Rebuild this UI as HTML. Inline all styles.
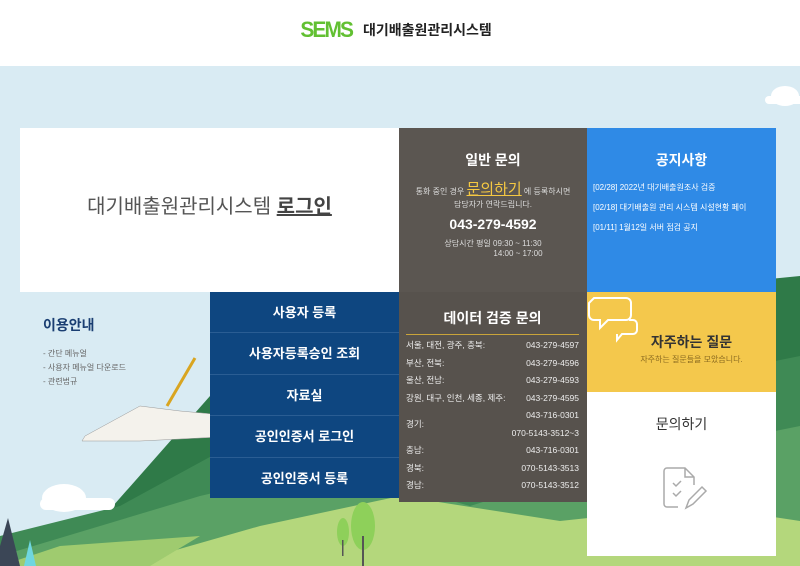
<!DOCTYPE html>
<html><head><meta charset="utf-8"><style>
*{margin:0;padding:0;box-sizing:border-box}
body{width:800px;height:566px;overflow:hidden;position:relative;font-family:"Liberation Sans","Noto Sans CJK KR",sans-serif;background:#d9ebf3}
.abs{position:absolute}
.hdr{left:0;top:0;width:800px;height:66px;background:#fff}
.c{text-align:center}
.menu div{height:41.4px;line-height:41px;border-bottom:1px solid #2a5d93;color:#fff;font-size:13px;font-weight:bold;text-align:center}
.row{display:flex;justify-content:space-between;font-size:8.5px;color:#eee;height:17.5px;line-height:17.5px}
</style></head><body>
<svg class="abs" style="left:0;top:66px" width="800" height="500">
<path d="M60 500 L210 330 L300 270 L420 200 L560 200 L700 220 L800 210 L800 500Z" fill="#2f7a48"/>
<path d="M0 470 L120 440 L230 380 L330 330 L470 380 L600 330 L800 290 L800 500 L0 500Z" fill="#3f8a55"/>
<path d="M0 490 L200 430 L330 400 L470 440 L600 400 L800 360 L800 500 L0 500Z" fill="#5aa165"/>
<path d="M120 500 L260 460 L400 430 L560 455 L700 440 L800 455 L800 500Z" fill="#b4d77c"/>
<path d="M0 500 L60 480 L200 470 L150 500Z" fill="#9fcb6f"/>
<path d="M0 480 L8 452 L20 500 L0 500Z" fill="#3b4656"/>
<path d="M24 500 L30 474 L36 500Z" fill="#6fd6df"/>
<ellipse cx="64" cy="432" rx="22" ry="14" fill="#fff"/><rect x="40" y="432" width="75" height="12" rx="6" fill="#fff"/>
<ellipse cx="785" cy="30" rx="14" ry="10" fill="#fff"/><rect x="765" y="30" width="40" height="8" rx="4" fill="#fff"/>
<ellipse cx="343" cy="466" rx="6" ry="14" fill="#8ed05a"/><ellipse cx="363" cy="460" rx="12" ry="24" fill="#8ed05a"/>
<rect x="362" y="470" width="2" height="30" fill="#555"/><rect x="342" y="474" width="1.5" height="16" fill="#555"/>
<path d="M85 370 L140 340 L180 345 L235 350 L240 370 L140 375 L82 375Z" fill="#f4f2ec" stroke="#999" stroke-width=".5"/>
<line x1="167" y1="340" x2="195" y2="292" stroke="#d9a520" stroke-width="3"/>
</svg>
<div class="abs hdr"><div class="abs" style="left:299px;top:17px;color:#62c032;font-weight:900;font-size:22px;letter-spacing:-2px;transform:scaleX(.95)">SEMS</div>
<div class="abs" style="left:363px;top:20px;font-size:14px;color:#222;font-weight:bold">대기배출원관리시스템</div></div>
<div class="abs" style="left:20px;top:128px;width:379px;height:164px;background:#fff;line-height:158px;text-align:center;font-size:20px;color:#555">대기배출원관리시스템 <b style="text-decoration:underline;color:#444">로그인</b></div>
<div class="abs c" style="left:399px;top:128px;width:188px;height:164px;background:#5b5651;color:#fff">
<div style="margin-top:22px;font-size:14px;font-weight:bold">일반 문의</div>
<div style="margin-top:8px;font-size:8px;color:#ddd">통화 중인 경우 <span style="color:#f5c842;font-size:15px;text-decoration:underline">문의하기</span> 에 등록하시면<br>담당자가 연락드립니다.</div>
<div style="margin-top:6px;font-size:14px;font-weight:bold">043-279-4592</div>
<div style="margin-top:6px;font-size:8px;color:#ddd">상담시간 평일 09:30 ~ 11:30<br><span style="padding-left:50px">14:00 ~ 17:00</span></div></div>
<div class="abs" style="left:587px;top:128px;width:189px;height:164px;background:#2f8ae6;color:#fff">
<div class="c" style="margin-top:22px;font-size:14px;font-weight:bold">공지사항</div>
<div style="margin:8px 0 0 6px;font-size:8px;line-height:20px">[02/28] 2022년 대기배출원조사 검증<br>[02/18] 대기배출원 관리 시스템 시설현황 페이<br>[01/11] 1월12일 서버 점검 공지</div></div>
<div class="abs" style="left:43px;top:315px;font-size:14px;font-weight:bold;color:#1a3e72">이용안내</div>
<div class="abs" style="left:43px;top:347px;font-size:8px;color:#666;line-height:14px">- 간단 메뉴얼<br>- 사용자 메뉴얼 다운로드<br>- 관련법규</div>
<div class="abs menu" style="left:210px;top:292px;width:189px;height:206px;background:#0e4680"><div>사용자 등록</div><div>사용자등록승인 조회</div><div>자료실</div><div>공인인증서 로그인</div><div style="border:0">공인인증서 등록</div></div>
<div class="abs" style="left:399px;top:292px;width:188px;height:210px;background:#57524d;padding:0 8px 0 7px">
<div class="c" style="margin-top:16px;font-size:14px;font-weight:bold;color:#fff;padding-bottom:6px;border-bottom:1px solid #c9a43a;margin-bottom:2px">데이터 검증 문의</div>
<div class="row"><span>서울, 대전, 광주, 충북:</span><span>043-279-4597</span></div>
<div class="row"><span>부산, 전북:</span><span>043-279-4596</span></div>
<div class="row"><span>울산, 전남:</span><span>043-279-4593</span></div>
<div class="row"><span>강원, 대구, 인천, 세종, 제주:</span><span>043-279-4595</span></div>
<div class="row" style="height:35px;line-height:17.5px"><span style="margin-top:9px">경기:</span><span style="text-align:right">043-716-0301<br>070-5143-3512~3</span></div>
<div class="row"><span>충남:</span><span>043-716-0301</span></div>
<div class="row"><span>경북:</span><span>070-5143-3513</span></div>
<div class="row"><span>경남:</span><span>070-5143-3512</span></div></div>
<div class="abs c" style="left:587px;top:292px;width:189px;height:100px;background:#f4c84c">
<svg class="abs" style="left:0;top:2px" width="55" height="50"><path d="M4 2h32a5 5 0 0 1 5 5v12a5 5 0 0 1-5 5H18l-8 8v-8H4a5 5 0 0 1-5-5V7z" fill="none" stroke="#fff" stroke-width="2" transform="translate(3,2)"/><path d="M42 26h4a4 4 0 0 1 4 4v6a4 4 0 0 1-4 4H35l-5 6v-6" fill="none" stroke="#fff" stroke-width="2"/></svg>
<div style="margin-top:40px;font-size:14px;font-weight:bold;color:#333;padding-left:20px">자주하는 질문</div>
<div style="font-size:8px;color:#8a6a20;margin-top:2px;padding-left:20px">자주하는 질문들을 모았습니다.</div></div>
<div class="abs c" style="left:587px;top:392px;width:189px;height:164px;background:#fff">
<div style="margin-top:22px;font-size:14px;color:#333">문의하기</div>
<svg class="abs" style="left:74px;top:74px" width="50" height="46" fill="none" stroke="#aaa" stroke-width="1.5"><path d="M6 2h18l9 9v8M6 2a3 3 0 0 0-3 3v33a3 3 0 0 0 3 3h11M24 2v9h9"/><path d="M12 17l3 3 5-5M12 27l3 3 5-5"/><path d="M25 42l3-8 13-13 4 4-13 13z"/></svg></div>
</body></html>
